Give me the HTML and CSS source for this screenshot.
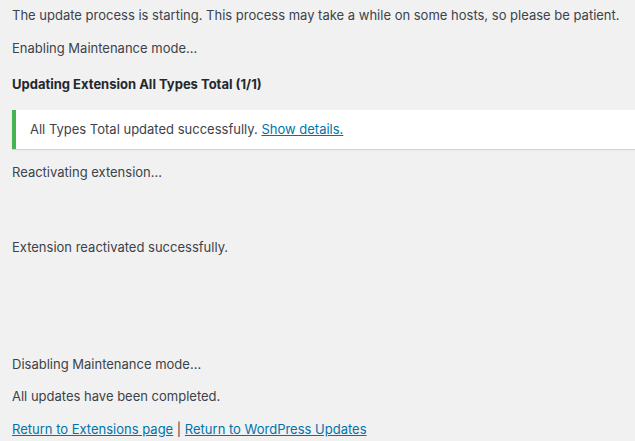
FILE: index.html
```html
<!DOCTYPE html>
<html lang="en">
<head>
<meta charset="utf-8">
<title>Update Extension</title>
<link rel="stylesheet" href="styles.css">
</head>
<body>
<div class="wrap">
  <p class="first">The update process is starting. This process may take a while on some hosts, so please be patient.</p>
  <p>Enabling Maintenance mode&hellip;</p>
  <h2 class="update-title">Updating Extension All Types Total (1/1)</h2>
  <div class="notice notice-success">
    <p>All Types Total updated successfully. <a href="#">Show details.</a></p>
  </div>
  <p>Reactivating extension&hellip;</p>
  <div class="frame frame-short"></div>
  <p>Extension reactivated successfully.</p>
  <div class="frame frame-tall"></div>
  <p>Disabling Maintenance mode&hellip;</p>
  <p>All updates have been completed.</p>
  <p><a href="#">Return to Extensions page</a> | <a href="#">Return to WordPress Updates</a></p>
</div>
</body>
</html>
```
FILE: styles.css
```css
html, body {
  margin: 0;
  padding: 0;
  background: #f1f1f1;
  overflow: hidden;
}
body {
  font-family: Inter, "Liberation Sans", sans-serif;
  font-size: 13px;
  line-height: 1.5;
  color: #3c434a;
}
.wrap {
  padding: 0 0 0 12px;
}
p {
  margin: 13px 0;
}
p.first {
  margin-top: 6px;
}
a {
  color: #0073aa;
  text-decoration: underline;
}
.update-title {
  font-size: 13px;
  font-weight: 700;
  line-height: 1.5;
  color: #23282d;
  margin: 16.5px 0 16px;
}
.notice {
  background: #fff;
  border-left: 4px solid #46b450;
  box-shadow: 0 1px 1px 0 rgba(0, 0, 0, 0.12);
  padding: 1px 12px;
  margin: 16px -20px 14px 0;
}
.notice p {
  margin: 6.5px 0;
  padding: 2px 2px;
}
.frame {
  width: 100%;
}
.frame-short {
  height: 29.5px;
}
.frame-tall {
  height: 71.5px;
}
```
